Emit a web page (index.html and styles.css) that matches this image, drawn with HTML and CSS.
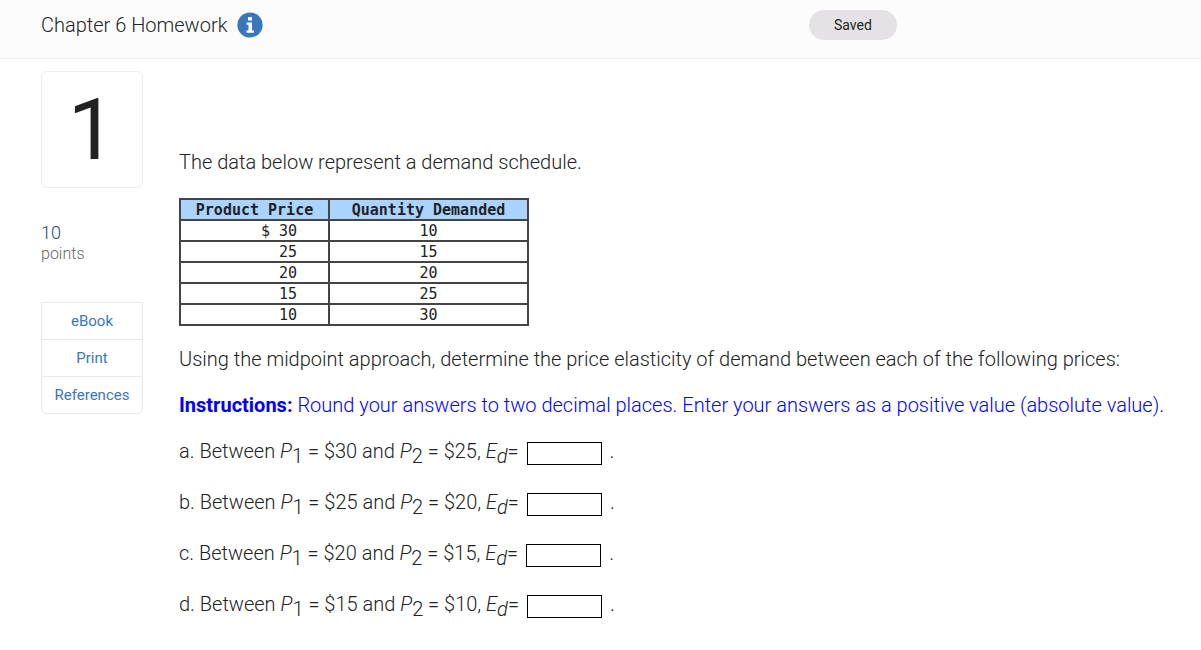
FILE: index.html
```
<!DOCTYPE html>
<html lang="en">

<head>
    <meta charset="UTF-8">
    <meta name="viewport" content="width=device-width, initial-scale=1.0">
    <title>Chapter 6 Homework</title>
    <link rel="stylesheet" href="styles.css">
</head>

<body>
    <!-- HEADER -->
    <header class="header">
        <div class="header-title">
            <h1>Chapter 6 Homework</h1>
            <button type="button" class="info-btn" aria-label="Assignment information">
                <svg width="26" height="26" viewBox="0 0 26 26">
                    <circle cx="13" cy="13" r="12.6" fill="#3a76bb" />
                    <path d="M11 5h4v3.600h-4z M9.500 10.500h5.500v8h2v2.300H9.500v-2.300h2V12.800h-2z" fill="#fff" />
                </svg>
            </button>
        </div>
        <span class="status">Saved</span>
    </header>

    <main class="main">
        <!-- SIDEBAR -->
        <aside class="sidebar">
            <div class="question-number">1</div>
            <p class="points"><span class="points-value">10</span>points</p>
            <nav class="resources">
                <a href="#">eBook</a>
                <a href="#">Print</a>
                <a href="#">References</a>
            </nav>
        </aside>

        <!-- QUESTION -->
        <section class="question">
            <p>The data below represent a demand schedule.</p>

            <table class="schedule">
                <thead>
                    <tr><th class="price">Product Price</th><th class="quantity">Quantity Demanded</th></tr>
                </thead>
                <tbody>
                    <tr><td>$ 30</td><td>10</td></tr>
                    <tr><td>25</td><td>15</td></tr>
                    <tr><td>20</td><td>20</td></tr>
                    <tr><td>15</td><td>25</td></tr>
                    <tr><td>10</td><td>30</td></tr>
                </tbody>
            </table>

            <p>Using the midpoint approach, determine the price elasticity of demand between each of the following prices:</p>
            <p class="instructions"><strong>Instructions:</strong> Round your answers to two decimal places. Enter your answers as a positive value (absolute value).</p>

            <div class="answer">
                <label for="answer-a">a. Between <i>P</i><sub>1</sub> = $30 and <i>P</i><sub>2</sub> = $25, <i>E<sub>d</sub></i>=</label>
                <input type="text" id="answer-a"> .
            </div>
            <div class="answer">
                <label for="answer-b">b. Between <i>P</i><sub>1</sub> = $25 and <i>P</i><sub>2</sub> = $20, <i>E<sub>d</sub></i>=</label>
                <input type="text" id="answer-b"> .
            </div>
            <div class="answer">
                <label for="answer-c">c. Between <i>P</i><sub>1</sub> = $20 and <i>P</i><sub>2</sub> = $15, <i>E<sub>d</sub></i>=</label>
                <input type="text" id="answer-c"> .
            </div>
            <div class="answer">
                <label for="answer-d">d. Between <i>P</i><sub>1</sub> = $15 and <i>P</i><sub>2</sub> = $10, <i>E<sub>d</sub></i>=</label>
                <input type="text" id="answer-d"> .
            </div>
        </section>
    </main>
</body>

</html>
```
FILE: styles.css
```
/* RESET */
* {
    margin: 0;
    padding: 0;
    box-sizing: border-box;
}

/* GENERAL */
body {
    background-color: #fff;
    color: #222;
    font-family: Roboto, Arial, sans-serif;
    font-size: 20px;
    font-weight: 300;
    line-height: 26px;
}

/* HEADER */
.header {
    display: grid;
    grid-template-columns: 768px auto;
    align-items: start;
    padding: 10px 41px 18px;
    background-color: #fcfcfc;
    border-bottom: 1px solid #eee;
}

.header-title {
    display: flex;
    align-items: center;
    gap: 10px;
    height: 30px;
}

.header h1 {
    font-size: 20px;
    font-weight: 300;
}

.info-btn {
    display: flex;
    border: none;
    background: none;
    cursor: pointer;
}

.status {
    justify-self: start;
    padding: 0 25px;
    border-radius: 15px;
    background-color: #e4e2e5;
    font-size: 14px;
    font-weight: 400;
    line-height: 30px;
}

/* MAIN */
.main {
    display: flex;
    gap: 36px;
    padding: 12px 20px 24px 41px;
}

/* SIDEBAR */
.sidebar {
    flex: none;
    width: 102px;
}

.question-number {
    padding: 8px 0;
    border: 1px solid #eee;
    border-radius: 6px;
    font-size: 86px;
    font-weight: 400;
    line-height: 99px;
    text-align: center;
}

.points {
    margin-top: 34px;
    color: #666;
    font-size: 16px;
    font-weight: 300;
    line-height: 21px;
}

.points-value {
    display: block;
    color: #1c4882;
    font-size: 18px;
}

.resources {
    margin-top: 38px;
    border: 1px solid #e8e8e8;
    border-radius: 0 0 6px 6px;
}

.resources a {
    display: block;
    color: #3a76bb;
    font-size: 15px;
    font-weight: 400;
    line-height: 36px;
    text-align: center;
    text-decoration: none;
}

.resources a + a {
    border-top: 1px solid #e8e8e8;
}

/* QUESTION */
.question {
    flex: 1;
    padding-top: 78px;
}

.question p {
    margin-bottom: 20px;
}

.schedule {
    margin: 23px 0 20px;
    border: 1px solid #333;
    border-collapse: collapse;
    font-family: "DejaVu Sans Mono", monospace;
    font-size: 15px;
    font-weight: 400;
    line-height: 17px;
    text-align: center;
}

.schedule th,
.schedule td {
    padding-top: 2px;
    border: 2px solid #444;
}

.schedule th {
    background-color: #aad4ff;
}

.schedule .price {
    width: 149px;
}

.schedule .quantity {
    width: 199px;
}

.schedule td:first-child {
    padding-right: 31px;
    text-align: right;
}

.question .instructions {
    color: #0000ff;
}

.instructions strong {
    font-weight: 700;
}

/* ANSWERS */
.answer {
    display: flex;
    gap: 8px;
    height: 31px;
    margin-bottom: 20px;
}

.answer sub {
    font-size: 20px;
    line-height: 0;
}

.answer input {
    width: 75px;
    height: 23px;
    margin-top: 4px;
    border: 1px solid #000;
}
```
